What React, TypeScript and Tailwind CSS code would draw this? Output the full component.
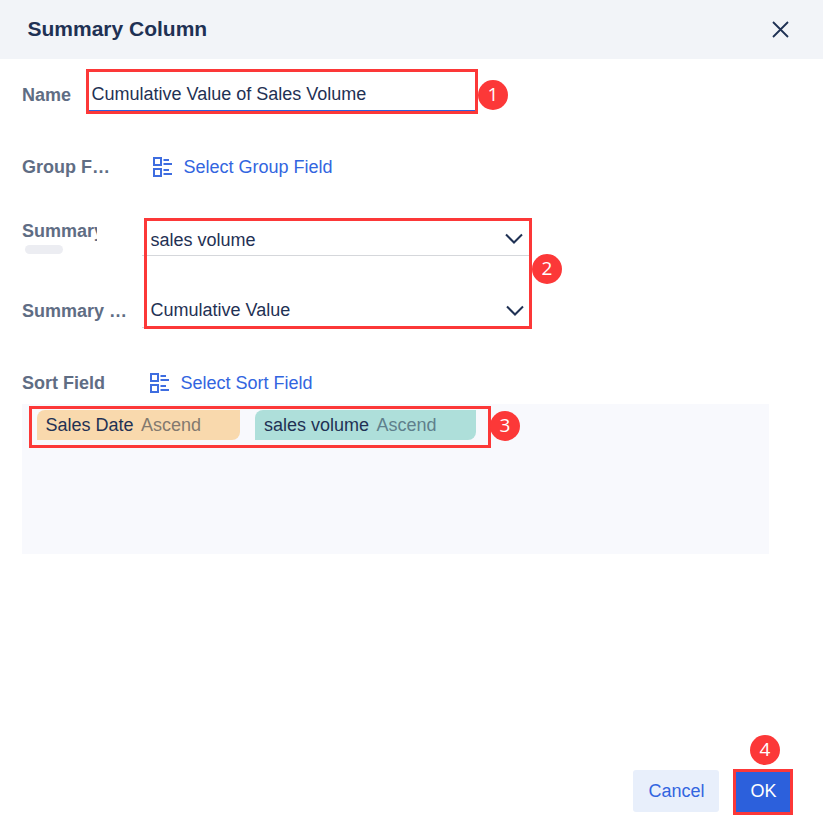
import type { ReactNode } from "react";

function ListIcon() {
  return (
    <svg width="20" height="20" viewBox="0 0 20 20" fill="none" stroke="#3e6de0" strokeWidth="2" className="shrink-0">
      <rect x="2" y="1" width="7" height="7" />
      <rect x="2" y="12" width="7" height="7" />
      <path d="M11.5 3h5.5M11.5 7h8.5M11.5 13h5.5M11.5 17h8.5" />
    </svg>
  );
}

function Chevron() {
  return (
    <svg width="18" height="12" viewBox="0 0 18 12" fill="none" stroke="#1f3154" strokeWidth="2">
      <path d="M1 1.5 9 9.5 17 1.5" />
    </svg>
  );
}

function Label({ children, className = "" }: { children: ReactNode; className?: string }) {
  return <span className={`shrink-0 overflow-hidden font-bold whitespace-nowrap text-[#5f6d84] ${className}`}>{children}</span>;
}

function Chip({ name, className, hint }: { name: string; className: string; hint: string }) {
  return (
    <div className={`flex h-[30px] items-center gap-[7.5px] rounded-tl-[8px] rounded-br-[8px] ${className}`}>
      <span>{name}</span>
      <span className={hint}>Ascend</span>
    </div>
  );
}

function Badge({ n, className }: { n: number; className: string }) {
  return (
    <div className={`absolute flex size-[30px] items-center justify-center rounded-full bg-[#fc3838] pb-[2px] font-['Open_Sans',sans-serif] text-[19px] leading-none text-white ${className}`}>
      {n}
    </div>
  );
}

export default function App() {
  return (
    <div className="relative flex h-[824px] w-[823px] flex-col overflow-hidden bg-white font-['Liberation_Sans',Arial,sans-serif] text-[18px] leading-[22px] text-[#1f3154]">
      <header className="flex h-[59px] shrink-0 items-center justify-between bg-[#f2f4f8] pr-[34px] pb-[1px] pl-[27.5px]">
        <h1 className="text-[21px] leading-6 font-bold">Summary Column</h1>
        <svg width="17" height="17" viewBox="0 0 17 17" fill="none" stroke="#1f3154" strokeWidth="1.8">
          <path d="M1 1 16 16M16 1 1 16" />
        </svg>
      </header>

      <main className="flex flex-col pl-[22px]">
        <div className="flex h-[71px] items-center">
          <Label className="w-[65px]">Name</Label>
          <div className="mb-[2px] flex h-[35px] w-[389px] items-center border-b border-[#2e61dc] pt-[2px] pl-[4.5px]">
            Cumulative Value of Sales Volume
          </div>
        </div>

        <div className="flex h-[74px] items-center">
          <Label className="w-[130px]">Group F…</Label>
          <div className="flex items-center gap-[11px] text-[#3265e0]">
            <ListIcon />
            <span className="pl-[0.5px]">Select Group Field</span>
          </div>
        </div>

        <div className="flex h-[52px] items-end">
          <div className="mb-[2px] flex w-[120px] flex-col gap-[3px]">
            <Label className="w-[75px]">Summary</Label>
            <div className="ml-[3px] h-[9px] w-[38px] rounded-full bg-[#ecedf2]" />
          </div>
          <div className="flex h-[35px] w-[388px] items-center justify-between border-b border-[#d5d7db] pt-[3px] pr-[7.5px] pl-[8.5px]">
            <span>sales volume</span>
            <div className="mb-[2px]">
              <Chevron />
            </div>
          </div>
        </div>

        <div className="mt-[35px] flex h-[37px] items-center">
          <Label className="mt-[2px] w-[120px]">Summary …</Label>
          <div className="flex h-[37px] w-[388px] items-center justify-between border-b border-[#d5d7db] pt-[2px] pr-[6px] pl-[8.5px]">
            <span>Cumulative Value</span>
            <div className="mt-[2px]">
              <Chevron />
            </div>
          </div>
        </div>

        <div className="mt-[34px] mb-[1px] flex h-[41px] items-center">
          <Label className="w-[127px]">Sort Field</Label>
          <div className="flex items-center gap-[11px] text-[#3265e0]">
            <ListIcon />
            <span className="pl-[0.5px]">Select Sort Field</span>
          </div>
        </div>

        <div className="flex h-[150px] w-[747px] items-start gap-[15px] bg-[#f8f9fd] pt-[6px] pl-[15px]">
          <Chip name="Sales Date" hint="text-[#83796f]" className="w-[203px] bg-[#f9d9ad] pl-[8.5px]" />
          <Chip name="sales volume" hint="text-[#5f7f8c]" className="w-[221px] bg-[#aedfda] pl-[9px]" />
        </div>
      </main>

      <footer className="mt-auto mb-[9px] flex items-start justify-end gap-[14px] pr-[30px]">
        <button className="mt-[1px] h-[42px] w-[86px] rounded-[3px] bg-[#e8effb] pl-[1px] text-[#3265e0]">Cancel</button>
        <button className="h-[46px] w-[60px] border-3 border-[#fc3838] bg-[#2c60dc] pb-[2px] pl-[1px] text-white">OK</button>
      </footer>

      <div className="absolute top-[69px] left-[86px] h-[45px] w-[392px] border-3 border-[#fc3838]" />
      <div className="absolute top-[218px] left-[144px] h-[111px] w-[388px] border-3 border-[#fc3838]" />
      <div className="absolute top-[406px] left-[29px] h-[42px] w-[462px] border-3 border-[#fc3838]" />
      <Badge n={1} className="top-[80px] left-[478px]" />
      <Badge n={2} className="top-[254px] left-[532px]" />
      <Badge n={3} className="top-[411px] left-[490px]" />
      <Badge n={4} className="top-[735px] left-[750px]" />
    </div>
  );
}
